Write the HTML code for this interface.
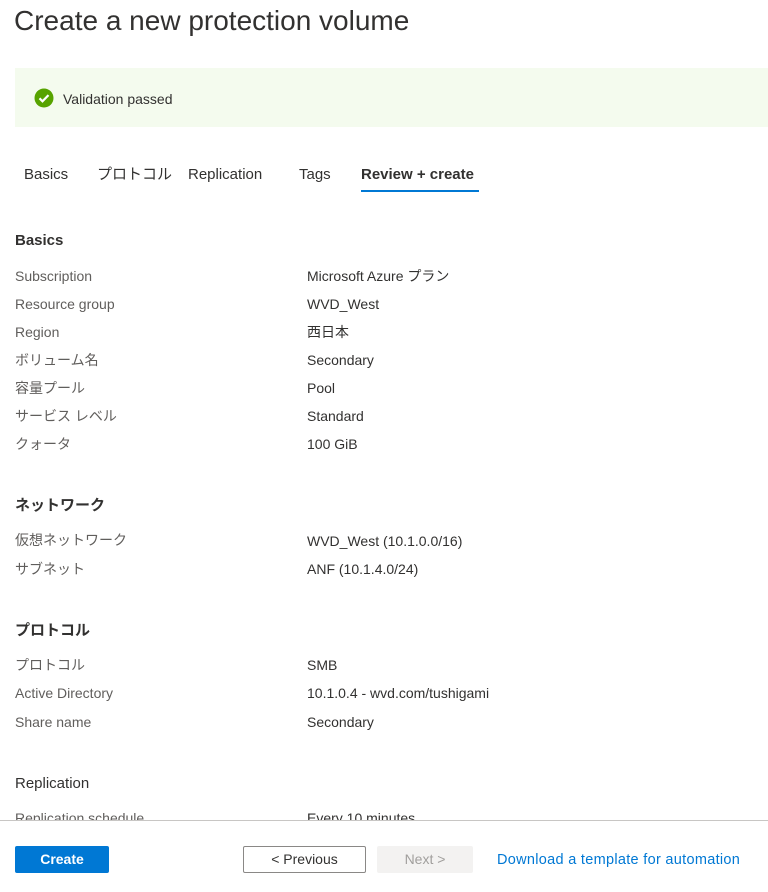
<!DOCTYPE html>
<html><head><meta charset="utf-8"><style>
body{margin:0;width:768px;height:891px;overflow:hidden;background:#fff;font-family:"Liberation Sans","Noto Sans CJK JP",sans-serif;color:#323130;position:relative}
.a{position:absolute;white-space:nowrap}
.t{font-size:14px;line-height:20px;color:#605e5c}
.v{font-size:14px;line-height:20px;color:#323130}
.h{font-size:15px;font-weight:bold;line-height:20px;color:#323130}
.tab{font-size:15px;line-height:20px;color:#323130;top:165px}
.btn{position:absolute;top:846px;height:27px;box-sizing:border-box;font-size:14px;line-height:25px;text-align:center}
</style></head><body>
<div class="a" style="left:14px;top:3px;font-size:28px;line-height:36px;color:#323130">Create a new protection volume</div>
<div class="a" style="left:15px;top:68px;width:753px;height:59px;background:#f4fbee"></div>
<svg class="a" style="left:34px;top:88px" width="20" height="20" viewBox="0 0 20 20"><circle cx="10" cy="10" r="9.5" fill="#57a300"/><path d="M5.5 10.3l3 3 6-6.2" stroke="#fff" stroke-width="2.2" fill="none"/></svg>
<div class="a" style="left:63px;top:89px;font-size:14px;line-height:20px;color:#323130">Validation passed</div>
<div class="a tab" style="left:24px">Basics</div>
<div class="a tab" style="left:97px">プロトコル</div>
<div class="a tab" style="left:188px">Replication</div>
<div class="a tab" style="left:299px">Tags</div>
<div class="a tab" style="left:361px;font-weight:bold">Review + create</div>
<div class="a" style="left:361px;top:190px;width:118px;height:2px;background:#0078d4"></div>

<div class="a h" style="left:15px;top:231px">Basics</div>
<div class="a t" style="left:15px;top:266px">Subscription</div><div class="a v" style="left:307px;top:266px">Microsoft Azure プラン</div>
<div class="a t" style="left:15px;top:294px">Resource group</div><div class="a v" style="left:307px;top:294px">WVD_West</div>
<div class="a t" style="left:15px;top:322px">Region</div><div class="a v" style="left:307px;top:322px">西日本</div>
<div class="a t" style="left:15px;top:350px">ボリューム名</div><div class="a v" style="left:307px;top:350px">Secondary</div>
<div class="a t" style="left:15px;top:378px">容量プール</div><div class="a v" style="left:307px;top:378px">Pool</div>
<div class="a t" style="left:15px;top:406px">サービス レベル</div><div class="a v" style="left:307px;top:406px">Standard</div>
<div class="a t" style="left:15px;top:434px">クォータ</div><div class="a v" style="left:307px;top:434px">100 GiB</div>

<div class="a h" style="left:15px;top:496px">ネットワーク</div>
<div class="a t" style="left:15px;top:530px">仮想ネットワーク</div><div class="a v" style="left:307px;top:531px">WVD_West (10.1.0.0/16)</div>
<div class="a t" style="left:15px;top:559px">サブネット</div><div class="a v" style="left:307px;top:559px">ANF (10.1.4.0/24)</div>

<div class="a h" style="left:15px;top:621px">プロトコル</div>
<div class="a t" style="left:15px;top:655px">プロトコル</div><div class="a v" style="left:307px;top:655px">SMB</div>
<div class="a t" style="left:15px;top:683px">Active Directory</div><div class="a v" style="left:307px;top:683px">10.1.0.4 - wvd.com/tushigami</div>
<div class="a t" style="left:15px;top:712px">Share name</div><div class="a v" style="left:307px;top:712px">Secondary</div>

<div class="a h" style="left:15px;top:774px;font-weight:normal">Replication</div>
<div class="a t" style="left:15px;top:808px">Replication schedule</div><div class="a v" style="left:307px;top:808px">Every 10 minutes</div>

<div class="a" style="left:0;top:820px;width:768px;height:71px;background:#fff;border-top:1px solid #c8c6c4"></div>
<div class="btn" style="left:15px;width:94px;background:#0078d4;color:#fff;border-radius:2px;font-weight:bold;line-height:27px">Create</div>
<div class="btn" style="left:243px;width:123px;border:1px solid #8a8886;border-radius:2px;color:#323130">&lt; Previous</div>
<div class="btn" style="left:377px;width:96px;background:#f3f2f1;color:#a19f9d;border-radius:2px;line-height:27px">Next &gt;</div>
<div class="a" style="left:497px;top:850px;font-size:14.5px;line-height:20px;color:#0078d4;letter-spacing:0.3px">Download a template for automation</div>
</body></html>
